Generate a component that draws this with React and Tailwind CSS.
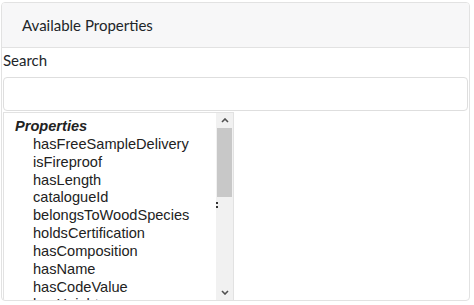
import React from 'react';

const PROPERTIES = [
  'hasFreeSampleDelivery',
  'isFireproof',
  'hasLength',
  'catalogueId',
  'belongsToWoodSpecies',
  'holdsCertification',
  'hasComposition',
  'hasName',
  'hasCodeValue',
  'hasHeight',
];

const ScrollBar = () => (
  <div className="flex w-[17px] shrink-0 flex-col bg-[#f1f1f1]">
    <div className="flex h-[15px] items-center justify-center">
      <svg width="8" height="5" viewBox="0 0 8 5">
        <path d="M1 4 L4 1 L7 4" fill="none" stroke="#505050" strokeWidth="1.6" />
      </svg>
    </div>
    <div className="mx-[1px] h-[69px] bg-[#c8c8c8]" />
    <div className="flex-1" />
    <div className="flex h-[15px] items-center justify-center">
      <svg width="8" height="5" viewBox="0 0 8 5">
        <path d="M1 1 L4 4 L7 1" fill="none" stroke="#505050" strokeWidth="1.6" />
      </svg>
    </div>
  </div>
);

export default function App() {
  return (
    <div className="h-[305px] w-[474px] bg-white pl-[1px] pt-[2px]">
      <div className="flex h-[299px] w-[469px] flex-col overflow-hidden rounded-[4px] border border-[#e2e2e2]">
        {/* header */}
        <div
          className="flex h-[45px] shrink-0 items-center border-b border-[#e2e2e2] bg-[#f7f7f8] pl-[20px] text-[15px] text-[#212529]"
          style={{ fontFamily: 'Lato, "Noto Sans", sans-serif' }}
        >
          Available Properties
        </div>

        <div className="flex min-h-0 flex-1 flex-col pl-[1px] pr-[1px]">
          <label
            className="block h-[24px] text-[15px] leading-[24px] text-[#212529]"
            style={{ fontFamily: 'Lato, "Noto Sans", sans-serif' }}
          >
            Search
          </label>
          <input
            type="text"
            className="mt-[5px] h-[34px] w-full shrink-0 rounded-[4px] border border-[#dedede] bg-white outline-none"
          />

          {/* property list */}
          <div className="relative mt-[1px] flex min-h-0 flex-1">
            <div className="flex w-[231px] border-r border-t border-[#e2e2e2] border-l">
              <div
                className="min-w-0 flex-1 overflow-hidden pl-[11px] pt-[5px] text-[14.6px] leading-[17.85px] text-[#222]"
                style={{ fontFamily: '"Liberation Sans", Arial, sans-serif' }}
              >
                <div className="font-bold italic">Properties</div>
                {PROPERTIES.map((p) => (
                  <div key={p} className="whitespace-nowrap pl-[18px]">
                    {p}
                  </div>
                ))}
              </div>
              <ScrollBar />
            </div>
            <div className="flex-1" />
            <span className="absolute left-[213px] top-[90px] h-[2px] w-[2px] bg-[#333]" />
            <span className="absolute left-[213px] top-[94px] h-[2px] w-[2px] bg-[#333]" />
          </div>
        </div>
      </div>
    </div>
  );
}
